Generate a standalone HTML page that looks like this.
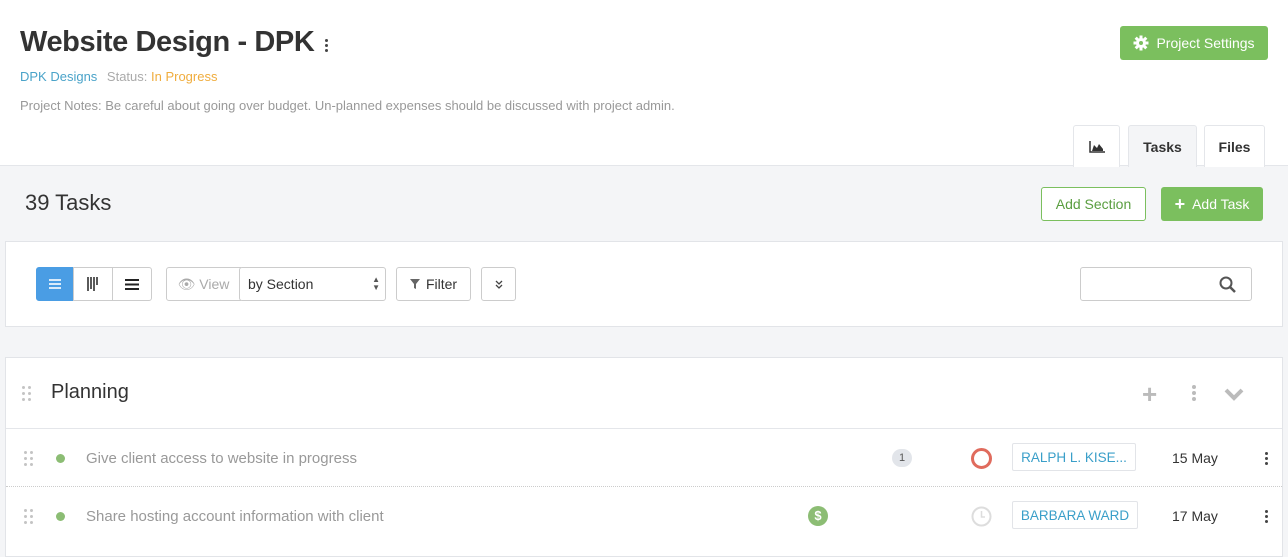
<!DOCTYPE html>
<html><head><style>
*{box-sizing:border-box;margin:0;padding:0}
body{width:1288px;height:544px;overflow:hidden;background:#f4f5f7;font-family:"Liberation Sans",sans-serif;position:relative;color:#333}
.a{position:absolute}
.top{left:0;top:0;width:1288px;height:166px;background:#fff;border-bottom:1px solid #e4e6ea}
.btn{position:absolute;border-radius:3px;font-size:14px;display:flex;align-items:center;justify-content:center}
.g{background:#7bbf5e;color:#fff}
.tab{position:absolute;top:125px;height:42px;border:1px solid #e4e6ea;border-bottom:none;border-radius:3px 3px 0 0;background:#fff;font-size:14px;font-weight:bold;color:#333;display:flex;align-items:center;justify-content:center}
.card{position:absolute;left:5px;width:1278px;background:#fff;border:1px solid #e2e4e8}
.ob{position:absolute;top:267px;height:34px;border:1px solid #ccc;border-radius:3px;background:#fff;font-size:14px;display:flex;align-items:center;justify-content:center;color:#444}
.dots{position:absolute;width:12px}
.dots i{display:block;width:3px;height:3px;border-radius:50%;background:#c4c4c4;margin:0 3px 3px 0;float:left}
.tag{position:absolute;height:28px;border:1px solid #e2e4e8;border-radius:2px;color:#3a9fc9;font-size:13.5px;display:flex;align-items:center;justify-content:center}
.vd{position:absolute;width:4px}
.vd i{display:block;width:4px;height:4px;background:#444;border-radius:50%;margin-bottom:2px}
</style></head><body>
<div class="a top"></div>
<div class="a" style="left:20px;top:26px;font-size:29px;font-weight:bold;color:#333;letter-spacing:-0.4px">Website Design - DPK</div>
<div class="vd" style="left:325px;top:39px;width:3px"><i style="width:3px;height:3px"></i><i style="width:3px;height:3px"></i><i style="width:3px;height:3px"></i></div>
<div class="a" style="left:20px;top:69px;font-size:13px;color:#4aa3c9">DPK Designs <span style="color:#aaa;margin-left:6px">Status: </span><span style="color:#f0ad3e">In Progress</span></div>
<div class="a" style="left:20px;top:98px;font-size:13px;color:#999">Project Notes: Be careful about going over budget. Un-planned expenses should be discussed with project admin.</div>
<div class="btn g" style="left:1120px;top:26px;width:148px;height:34px"><svg width="16" height="16" viewBox="0 0 16 16" style="margin-right:7px"><circle cx="8" cy="8" r="5" fill="#fff"/><g stroke="#fff" stroke-width="3"><line x1="8" y1="0.5" x2="8" y2="15.5"/><line x1="0.5" y1="8" x2="15.5" y2="8"/><line x1="2.7" y1="2.7" x2="13.3" y2="13.3"/><line x1="13.3" y1="2.7" x2="2.7" y2="13.3"/></g><circle cx="8" cy="8" r="2" fill="#7bbf5e"/></svg>Project Settings</div>
<div class="tab" style="left:1073px;width:47px"><svg width="16" height="12" viewBox="0 0 16 12"><path d="M1 0V11H16" stroke="#333" stroke-width="1.5" fill="none"/><path d="M3 10L5 4L8 7L10 3L14 8V10Z" fill="#333"/></svg></div>
<div class="tab" style="left:1128px;width:69px;background:#f4f5f7">Tasks</div>
<div class="tab" style="left:1204px;width:61px">Files</div>
<div class="a" style="left:25px;top:190px;font-size:22px;color:#333">39 Tasks</div>
<div class="btn" style="left:1041px;top:187px;width:105px;height:34px;border:1px solid #7bbf5e;color:#5a9e40;background:#fff">Add Section</div>
<div class="btn g" style="left:1161px;top:187px;width:102px;height:34px"><b style="font-size:18px;margin-right:7px">+</b>Add Task</div>
<div class="card" style="top:241px;height:86px"></div>
<div class="ob" style="left:36px;width:38px;background:#4a9de4;border-color:#4a9de4;border-radius:3px 0 0 3px"><svg width="12" height="10"><g stroke="#fff" stroke-width="1.6"><line x1="0" y1="1" x2="12" y2="1"/><line x1="0" y1="5" x2="12" y2="5"/><line x1="0" y1="9" x2="12" y2="9"/></g></svg></div>
<div class="ob" style="left:73px;width:40px;border-radius:0"><svg width="12" height="14"><g stroke="#222" stroke-width="1.5"><line x1="1" y1="0" x2="1" y2="14"/><line x1="4" y1="0" x2="4" y2="12"/><line x1="7" y1="0" x2="7" y2="14"/><line x1="10" y1="0" x2="10" y2="8"/></g></svg></div>
<div class="ob" style="left:112px;width:40px;border-radius:0 3px 3px 0"><svg width="14" height="11"><g stroke="#222" stroke-width="2"><line x1="0" y1="1" x2="14" y2="1"/><line x1="0" y1="5.5" x2="14" y2="5.5"/><line x1="0" y1="10" x2="14" y2="10"/></g></svg></div>
<div class="ob" style="left:166px;width:75px;color:#aaa;border-radius:3px 0 0 3px">👁&#xFE0E; View</div>
<div class="ob" style="left:239px;width:147px;justify-content:flex-start;padding-left:8px;color:#333">by Section<span style="position:absolute;right:5px;top:8px;font-size:8px;line-height:8px;color:#555">▲<br>▼</span></div>
<div class="ob" style="left:396px;width:75px;color:#333"><svg width="10" height="10" style="margin-right:6px"><path d="M0 0H10L6 5V10L4 9V5Z" fill="#666"/></svg>Filter</div>
<div class="ob" style="left:481px;width:35px"><svg width="10" height="10"><path d="M2 2L5 5L8 2M2 6L5 9L8 6" stroke="#444" stroke-width="1.3" fill="none"/></svg></div>
<div class="ob" style="left:1080px;width:172px;top:267px"><svg width="18" height="18" style="position:absolute;right:14px;top:8px"><circle cx="7" cy="7" r="5.5" stroke="#555" stroke-width="2" fill="none"/><line x1="11" y1="11" x2="16" y2="16" stroke="#555" stroke-width="2.5"/></svg></div>
<div class="card" style="top:357px;height:200px"></div>
<div class="dots" style="left:22px;top:386px"><i></i><i></i><i></i><i></i><i></i><i></i></div>
<div class="a" style="left:51px;top:381px;font-size:20px;color:#333">Planning</div>
<div class="a" style="left:1142px;top:383px;font-size:26px;color:#bbb;font-weight:bold;line-height:22px">+</div>
<div class="vd" style="left:1192px;top:385px"><i style="background:#bbb"></i><i style="background:#bbb"></i><i style="background:#bbb"></i></div>
<svg class="a" style="left:1224px;top:388px" width="20" height="14"><path d="M2 2L10 10L18 2" stroke="#bbb" stroke-width="4" fill="none"/></svg>
<div class="a" style="left:6px;top:428px;width:1276px;border-top:1px solid #e4e6ea"></div>
<div class="a" style="left:6px;top:486px;width:1276px;border-top:1px dotted #ccc"></div>
<div class="dots" style="left:24px;top:451px"><i></i><i></i><i></i><i></i><i></i><i></i></div>
<div class="dots" style="left:24px;top:509px"><i></i><i></i><i></i><i></i><i></i><i></i></div>
<div class="a" style="left:56px;top:454px;width:9px;height:9px;border-radius:50%;background:#8cbd74"></div>
<div class="a" style="left:56px;top:512px;width:9px;height:9px;border-radius:50%;background:#8cbd74"></div>
<div class="a" style="left:86px;top:450px;font-size:15px;color:#999">Give client access to website in progress</div>
<div class="a" style="left:86px;top:508px;font-size:15px;color:#999">Share hosting account information with client</div>
<div class="a" style="left:892px;top:449px;width:20px;height:18px;border-radius:9px;background:#e2e5ea;font-size:11px;color:#555;text-align:center;line-height:18px">1</div>
<div class="a" style="left:971px;top:448px;width:21px;height:21px;border-radius:50%;border:3px solid #e06b5d"></div>
<div class="a" style="left:808px;top:506px;width:20px;height:20px;border-radius:50%;background:#8cbd74;color:#fff;font-size:13px;font-weight:bold;text-align:center;line-height:20px">$</div>
<svg class="a" style="left:971px;top:506px" width="21" height="21"><circle cx="10.5" cy="10.5" r="9" stroke="#ddd" stroke-width="2" fill="none"/><path d="M10.5 5V11H14" stroke="#ddd" stroke-width="1.5" fill="none"/></svg>
<div class="tag" style="left:1012px;top:443px;width:124px">RALPH L. KISE...</div>
<div class="tag" style="left:1012px;top:501px;width:126px">BARBARA WARD</div>
<div class="a" style="left:1172px;top:450px;font-size:14px;color:#333">15 May</div>
<div class="a" style="left:1172px;top:508px;font-size:14px;color:#333">17 May</div>
<div class="vd" style="left:1265px;top:452px;width:3px"><i style="width:3px;height:3px"></i><i style="width:3px;height:3px"></i><i style="width:3px;height:3px"></i></div>
<div class="vd" style="left:1265px;top:510px;width:3px"><i style="width:3px;height:3px"></i><i style="width:3px;height:3px"></i><i style="width:3px;height:3px"></i></div>
</body></html>
